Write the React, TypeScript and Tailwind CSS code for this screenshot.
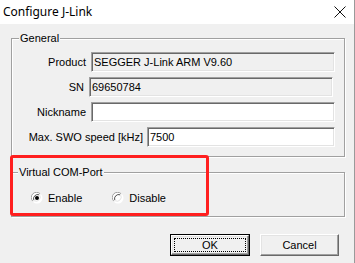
import React from "react";

type FieldProps = {
  label: string;
  value: string;
  width: string;
  gap: string;
  readOnly?: boolean;
};

function Field({ label, value, width, gap, readOnly }: FieldProps) {
  return (
    <div className={`flex items-center justify-end pr-[9px] h-[20px] ${gap}`}>
      <span className="leading-none whitespace-nowrap">{label}</span>
      <div
        className={`${width} h-[20px] border border-t-[#a0a0a0] border-l-[#a0a0a0] border-b-white border-r-white shadow-[inset_1px_1px_0_#696969,inset_-1px_-1px_0_#e3e3e3] flex items-center pl-[2px] ${
          readOnly ? "bg-[#f0f0f0]" : "bg-white"
        }`}
      >
        <span className="leading-none">{value}</span>
      </div>
    </div>
  );
}

function Radio({ checked }: { checked?: boolean }) {
  return (
    <svg width="12" height="12" viewBox="0 0 12 12" className="shrink-0">
      <circle cx="6" cy="6" r="5.5" fill="#ffffff" />
      <path d="M1.8 9.2 A5.2 5.2 0 0 1 9.2 1.8" fill="none" stroke="#a0a0a0" strokeWidth="1" />
      <path d="M2.8 8.2 A4.2 4.2 0 0 1 8.2 2.8" fill="none" stroke="#505050" strokeWidth="1" />
      <path d="M8.8 3.2 A4.2 4.2 0 0 1 3.2 8.8" fill="none" stroke="#e3e3e3" strokeWidth="1" />
      {checked && <circle cx="6" cy="6" r="2" fill="#000000" />}
    </svg>
  );
}

function Button({ label, isDefault, width }: { label: string; isDefault?: boolean; width: string }) {
  if (isDefault) {
    return (
      <div className={`${width} h-[22px] border border-black bg-[#f0f0f0]`}>
        <div className="w-full h-full border border-t-white border-l-white border-b-[#696969] border-r-[#696969] shadow-[inset_-1px_-1px_0_#a0a0a0,inset_1px_1px_0_#e3e3e3] p-[2px]">
          <div className="w-full h-full border border-dotted border-black flex items-center justify-center">
            <span className="leading-none">{label}</span>
          </div>
        </div>
      </div>
    );
  }
  return (
    <div
      className={`${width} h-[22px] bg-[#f0f0f0] border border-t-white border-l-white border-b-[#696969] border-r-[#696969] shadow-[inset_-1px_-1px_0_#a0a0a0,inset_1px_1px_0_#e3e3e3] flex items-center justify-center`}
    >
      <span className="leading-none">{label}</span>
    </div>
  );
}

export default function App() {
  return (
    <div className="relative w-[355px] h-[263px] overflow-hidden bg-[#f0f0f0] border-r border-[#9a9a9a] flex flex-col font-['Liberation_Sans',Arial,sans-serif] text-[11px] text-black">
      {/* title bar */}
      <div className="h-[24px] bg-white flex items-center justify-between pl-[3px] pr-[8px] shrink-0">
        <span className="font-['Noto_Sans',sans-serif] text-[12px] leading-none">Configure J-Link</span>
        <svg width="12" height="12" viewBox="0 0 12 12">
          <path d="M0.5 0.5 L11.5 11.5 M11.5 0.5 L0.5 11.5" stroke="#111" strokeWidth="1" />
        </svg>
      </div>

      {/* General */}
      <div className="relative ml-[11px] mt-[14px] w-[334px] h-[119px] border border-[#a0a0a0] shadow-[inset_1px_1px_0_#ffffff,1px_1px_0_#ffffff] flex flex-col gap-[5px] pt-[13px]">
        <span className="absolute left-[7px] top-[-7px] px-[1px] bg-[#f0f0f0] leading-[13px]">General</span>
        <Field label="Product" value="SEGGER J-Link ARM V9.60" width="w-[244px]" gap="gap-[5px]" readOnly />
        <div className="pr-[2px]">
          <Field label="SN" value="69650784" width="w-[244px]" gap="gap-[5px]" readOnly />
        </div>
        <Field label="Nickname" value="" width="w-[244px]" gap="gap-[5px]" />
        <Field label="Max. SWO speed [kHz]" value="7500" width="w-[188px]" gap="gap-[4px]" />
      </div>

      {/* Virtual COM-Port */}
      <div className="relative ml-[11px] mt-[15px] w-[334px] h-[45px] border border-[#a0a0a0] shadow-[inset_1px_1px_0_#ffffff,1px_1px_0_#ffffff] flex items-center pl-[19px] pt-[7px]">
        <span className="absolute left-[6px] top-[-7px] px-[1px] bg-[#f0f0f0] leading-[13px]">Virtual COM-Port</span>
        <div className="flex items-center gap-[5px]">
          <Radio checked />
          <span className="leading-none">Enable</span>
        </div>
        <div className="flex items-center gap-[5px] ml-[30px]">
          <Radio />
          <span className="leading-none">Disable</span>
        </div>
      </div>

      {/* buttons */}
      <div className="flex justify-end gap-[10px] pr-[15px] mt-[17px]">
        <Button label="OK" isDefault width="w-[80px]" />
        <Button label="Cancel" width="w-[79px]" />
      </div>

      {/* red annotation */}
      <div className="absolute left-[10px] top-[155px] w-[199px] h-[61px] border-[3px] border-[#ff1f1f] rounded-[3px] pointer-events-none" />
    </div>
  );
}
